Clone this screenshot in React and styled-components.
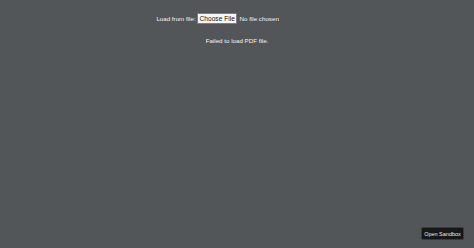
import styled, { createGlobalStyle } from "styled-components";

const GlobalStyle = createGlobalStyle`
  html, body {
    margin: 0;
    padding: 0;
    height: 100%;
    background: #525659;
  }
  #root {
    min-height: 100%;
  }
`;

const Page = styled.div`
  min-height: 248px;
  display: flex;
  flex-direction: column;
  align-items: center;
  padding-top: 13px;
  font-family: "Liberation Sans", Arial, sans-serif;
  color: #f5f5f5;
  box-sizing: border-box;
`;

const Loader = styled.div`
  display: flex;
  align-items: center;
  gap: 1px;
  height: 11px;
  font-size: 6.2px;
`;

const Label = styled.label`
  white-space: nowrap;
`;

const FileInput = styled.input`
  font-family: "Liberation Sans", Arial, sans-serif;
  font-size: 6.2px;
  color: #f5f5f5;
  width: 121px;
  margin: 0;

  &::file-selector-button {
    font-family: "Liberation Sans", Arial, sans-serif;
    font-size: 6.6px;
    background: #f7f7f7;
    color: #111;
    border: 1px solid #7c7c7c;
    border-radius: 1px;
    padding: 0 2px;
    margin: 0 3px 0 0;
    width: 40px;
    height: 11px;
  }
`;

const Message = styled.p`
  margin: 13px 0 0 0;
  font-size: 6.2px;
  line-height: 8px;
  color: #f5f5f5;
`;

const SandboxButton = styled.button`
  position: fixed;
  right: 10px;
  bottom: 8px;
  width: 43px;
  height: 13px;
  padding: 0;
  background: #171717;
  color: #ececec;
  border: 1px solid #3a3a3a;
  border-radius: 2px;
  font-family: "Liberation Sans", Arial, sans-serif;
  font-size: 5.5px;
  cursor: pointer;
`;

const App = () => {
  return (
    <>
      <GlobalStyle />
      <Page>
        <Loader>
          <Label htmlFor="file">Load from file:</Label>
          <FileInput id="file" type="file" />
        </Loader>
        <Message>Failed to load PDF file.</Message>
      </Page>
      <SandboxButton>Open Sandbox</SandboxButton>
    </>
  );
};

export default App;
